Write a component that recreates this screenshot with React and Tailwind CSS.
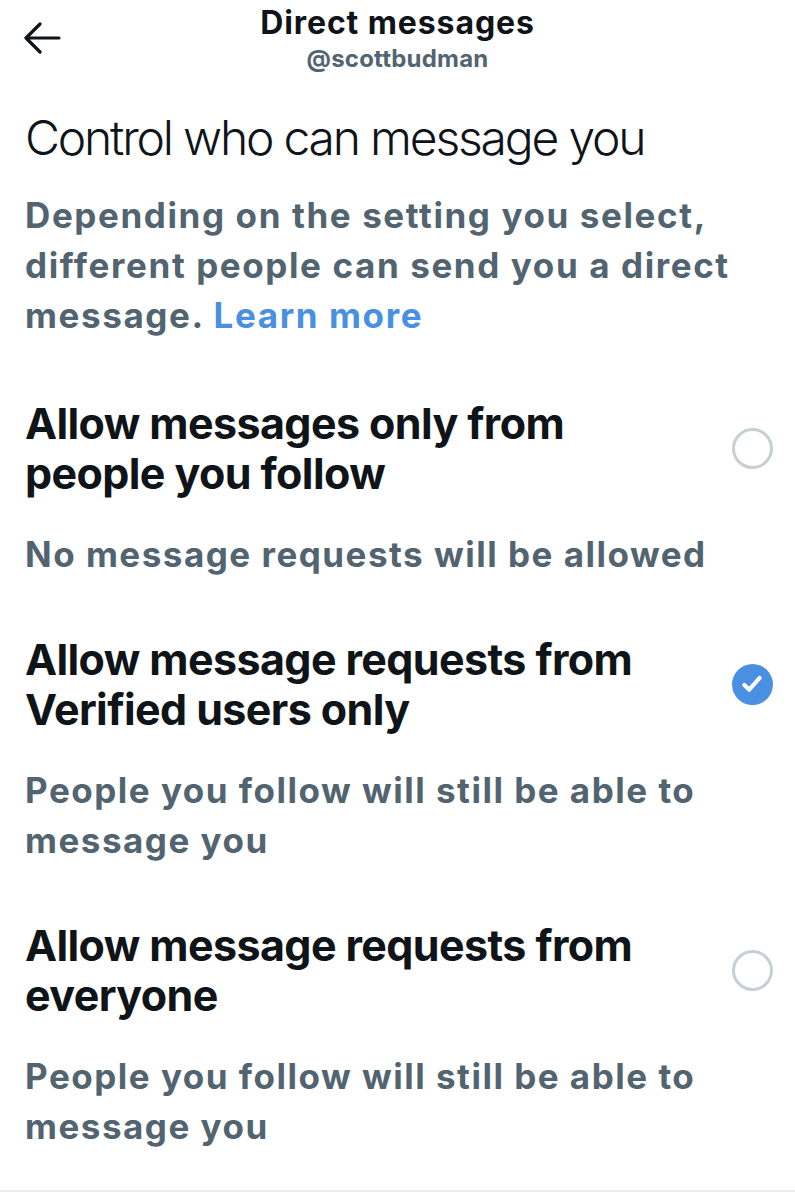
import React, { useState } from 'react';

const font = { fontFamily: 'Inter, "Noto Sans", sans-serif' };

const Radio = ({ checked, onClick }) => (
  <button onClick={onClick} className="shrink-0 w-[41px] h-[41px] flex items-center justify-center bg-transparent border-none p-0 cursor-pointer">
    {checked ? (
      <span className="w-[41px] h-[41px] rounded-full bg-[#4a90e2] flex items-center justify-center">
        <svg width="41" height="41" viewBox="0 0 40 40" fill="none">
          <path d="M12 20.5l4.8 4.6L27 13.5" stroke="white" strokeWidth="4" strokeLinecap="round" strokeLinejoin="round" />
        </svg>
      </span>
    ) : (
      <span className="w-[41px] h-[41px] rounded-full border-[3px] border-[#c4cfd6]" />
    )}
  </button>
);

const options = [
  { id: 'following', title: ['Allow messages only from', 'people you follow'], note: ['No message requests will be allowed'] },
  { id: 'verified', title: ['Allow message requests from', 'Verified users only'], note: ['People you follow will still be able to', 'message you'] },
  { id: 'everyone', title: ['Allow message requests from', 'everyone'], note: ['People you follow will still be able to', 'message you'] },
];

export default function App() {
  const [selected, setSelected] = useState('verified');

  return (
    <div className="w-[795px] h-[1200px] bg-white text-[#0f1419] overflow-hidden" style={font}>
      {/* header */}
      <div className="relative flex flex-col items-center pt-[3px]">
        <button className="absolute left-[23px] top-[22px] bg-transparent border-none p-0 flex">
          <svg width="38" height="32" viewBox="0 0 38 32" fill="none">
            <path d="M36 16H3M17 2L3 16l14 14" stroke="#0f1419" strokeWidth="3.2" strokeLinecap="round" strokeLinejoin="round" />
          </svg>
        </button>
        <h1 className="m-0 text-[32px] leading-[40px] font-bold tracking-[0.9px]">Direct messages</h1>
        <p className="m-0 text-[24px] leading-[32px] font-bold text-[#536471] tracking-[0.2px]">@scottbudman</p>
      </div>

      <div className="px-[25px] pr-[22px]">
        <h2 className="m-0 mt-[35px] text-[48px] leading-[56px] font-light tracking-[-2.2px] whitespace-nowrap">Control who can message you</h2>
        <p className="m-0 mt-[24px] text-[35px] leading-[50px] font-bold text-[#536471] tracking-[1.6px] whitespace-nowrap">
          Depending on the setting you select,<br />different people can send you a direct<br />message. <a className="text-[#4a90e2] no-underline cursor-pointer">Learn more</a>
        </p>

        <div className="mt-[58px] flex flex-col gap-[55px]">
          {options.map(o => (
            <div key={o.id}>
              <div className="flex items-center justify-between">
                <div className="text-[43px] leading-[50px] font-bold tracking-[-0.6px] whitespace-nowrap">
                  {o.title.map(t => <div key={t}>{t}</div>)}
                </div>
                <Radio checked={selected === o.id} onClick={() => setSelected(o.id)} />
              </div>
              <div className="mt-[31px] text-[35px] leading-[50px] font-bold text-[#536471] tracking-[1.5px] whitespace-nowrap">
                {o.note.map(t => <div key={t}>{t}</div>)}
              </div>
            </div>
          ))}
        </div>
      </div>
      <div className="mt-[39px] border-t-2 border-[#ececec]" />
    </div>
  );
}
